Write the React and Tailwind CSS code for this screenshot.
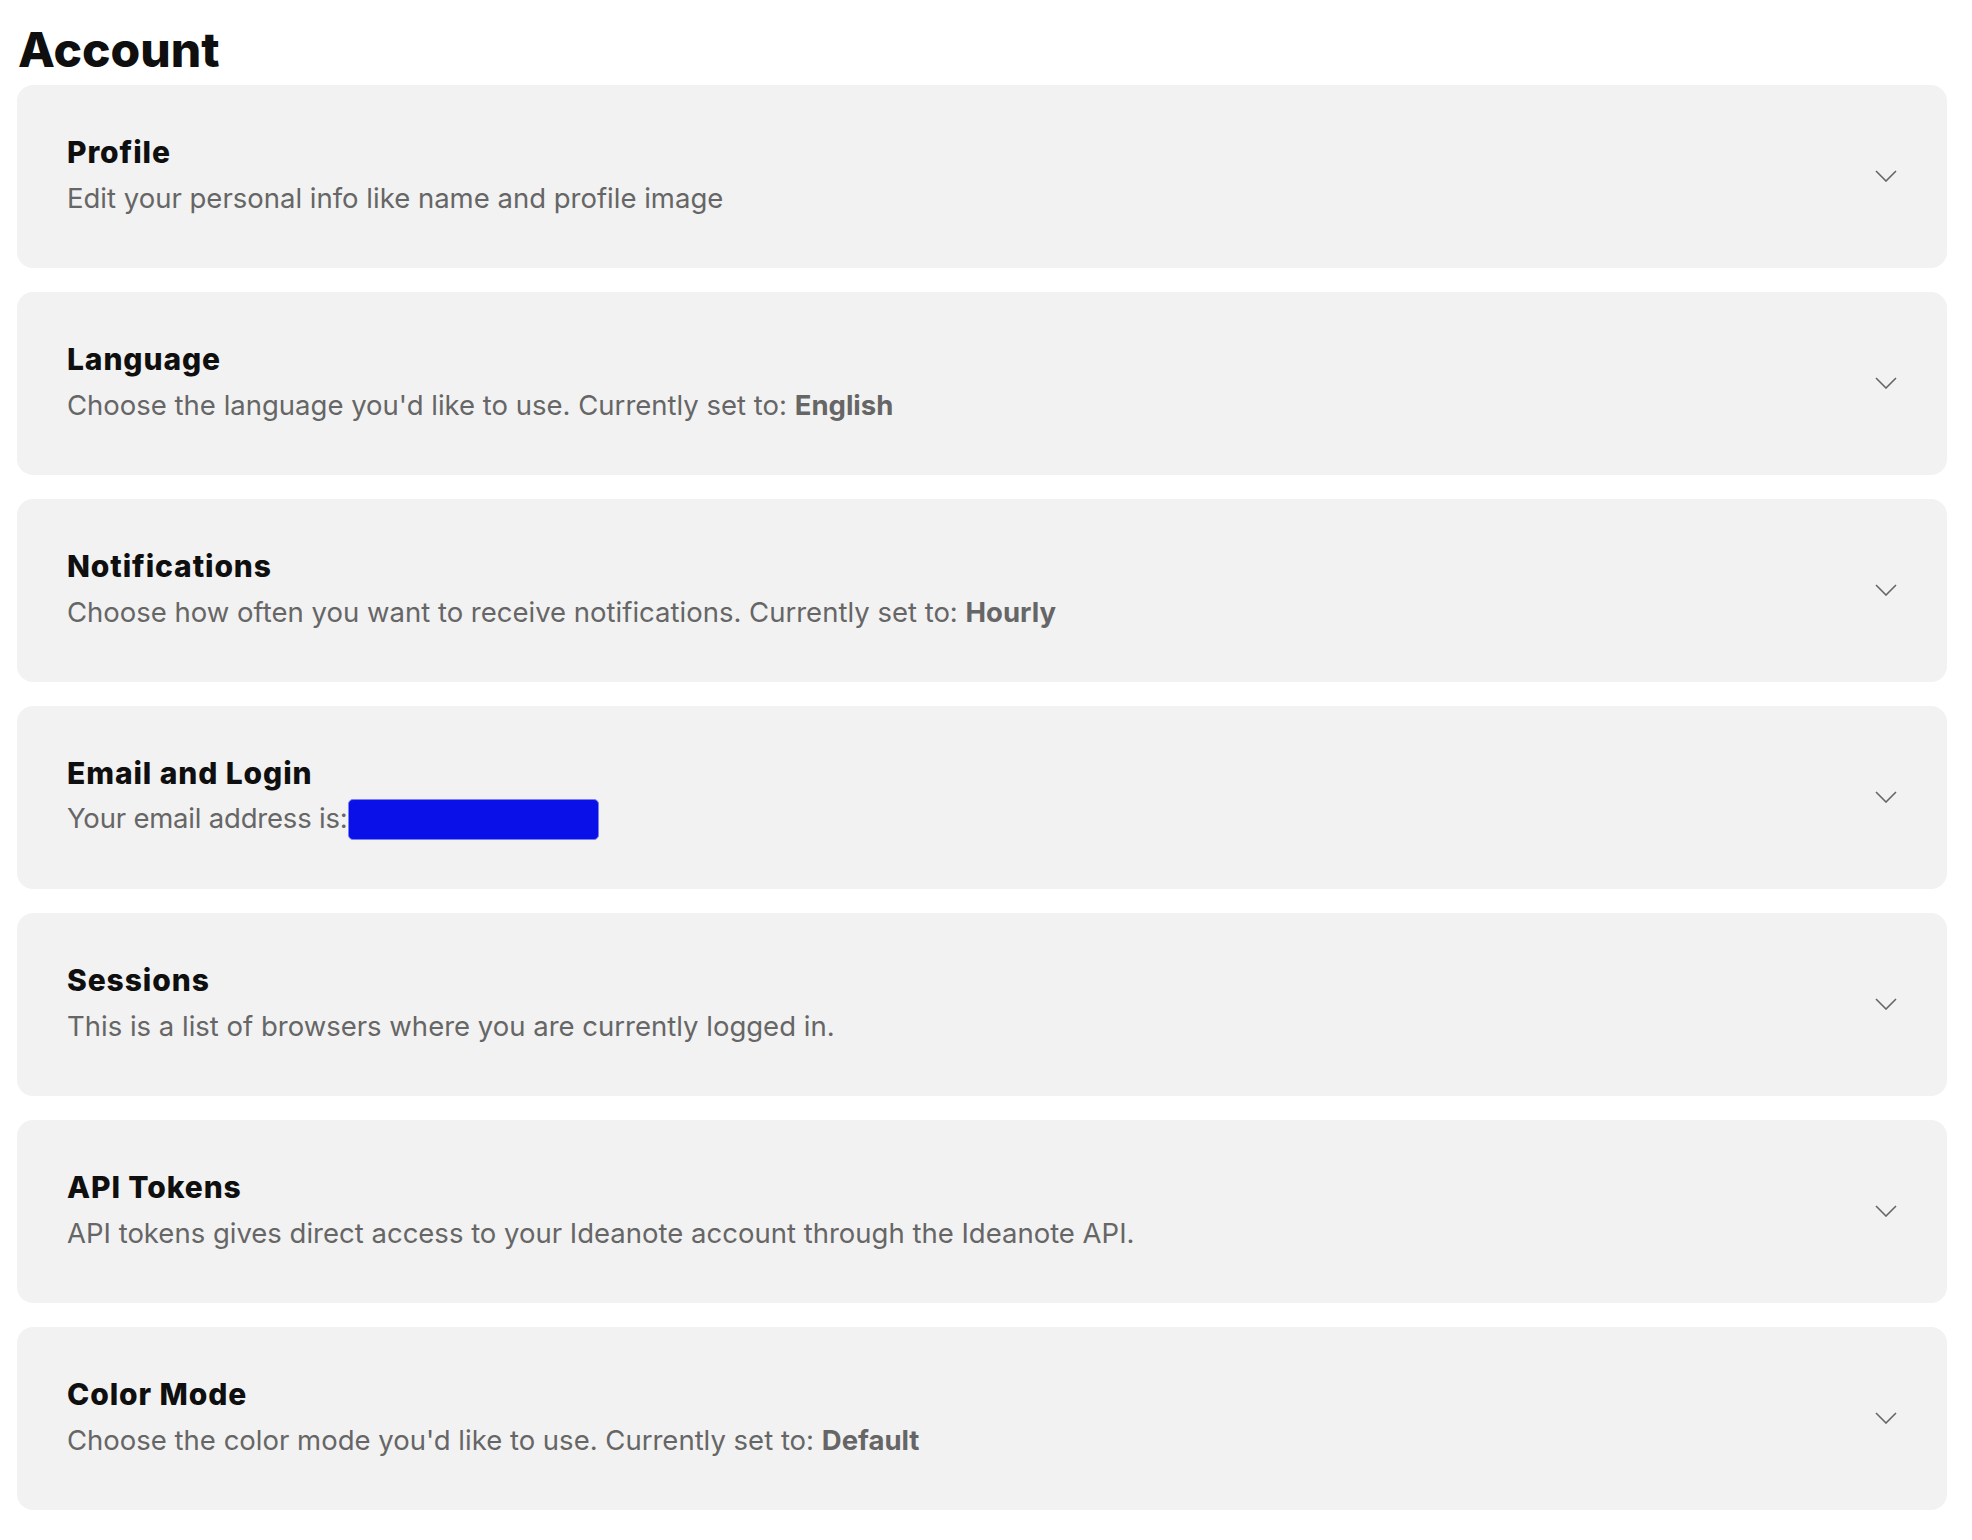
const rows = [
  { title: "Profile", text: "Edit your personal info like name and profile image" },
  { title: "Language", text: "Choose the language you'd like to use. Currently set to: ", value: "English" },
  { title: "Notifications", text: "Choose how often you want to receive notifications. Currently set to: ", value: "Hourly" },
  { title: "Email and Login", text: "Your email address is:", email: true },
  { title: "Sessions", text: "This is a list of browsers where you are currently logged in." },
  { title: "API Tokens", text: "API tokens gives direct access to your Ideanote account through the Ideanote API." },
  { title: "Color Mode", text: "Choose the color mode you'd like to use. Currently set to: ", value: "Default" },
];

function Chevron() {
  return (
    <svg width="22" height="12" viewBox="0 0 22 12" fill="none" className="shrink-0">
      <path d="M1 1L11 11L21 1" stroke="#666666" strokeWidth="1.6" />
    </svg>
  );
}

export default function App() {
  return (
    <div className="min-h-screen bg-white px-[17px] pt-[26px] font-['Inter',sans-serif]">
      <h1 className="text-[48px] leading-none font-extrabold text-[#0f0f0f] ml-[1px] mb-[11px]">
        Account
      </h1>

      <div className="flex flex-col gap-[24px] w-[1930px]">
        {rows.map((row) => (
          <div
            key={row.title}
            className="flex items-center justify-between bg-[#f2f2f2] rounded-[16px] pl-[50px] pr-[50px] pt-[48px] pb-[50px]"
          >
            <div className="flex flex-col">
              <div className="text-[30px] leading-[38px] font-extrabold tracking-[0.9px] text-[#0f0f0f]">
                {row.title}
              </div>
              {row.email ? (
                <div className="flex items-center h-[40px] mt-[7px] text-[27.5px] text-[#666666]">
                  <span className="tracking-[-0.2px]">{row.text}</span>
                  <span className="inline-block w-[251px] h-[41px] rounded-[5px] bg-[#0a10e8] border border-[#7b7ff0]"></span>
                </div>
              ) : (
                <div className="text-[27.5px] leading-[40px] mt-[7px] text-[#666666]">
                  {row.text}
                  {row.value && <span className="font-bold">{row.value}</span>}
                </div>
              )}
            </div>
            <Chevron />
          </div>
        ))}
      </div>
    </div>
  );
}
